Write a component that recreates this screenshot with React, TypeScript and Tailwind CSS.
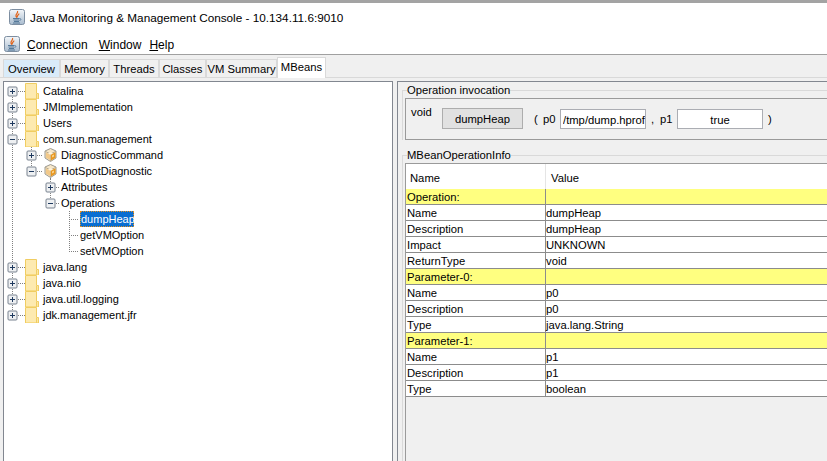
import * as React from "react";

const LEVELS = [
    { x: 12, text: 43 },
    { x: 31, text: 61 },
    { x: 50, text: 61 },
    { x: 69, text: 80 },
];

function JavaIcon() {
    return (
        <svg width="16" height="16" viewBox="0 0 16 16" className="shrink-0">
            <defs>
                <linearGradient id="javaBg" x1="0" y1="0" x2="0" y2="1">
                    <stop offset="0" stopColor="#f4f7fa" />
                    <stop offset="1" stopColor="#a9bccf" />
                </linearGradient>
            </defs>
            <rect x="0.5" y="0.5" width="15" height="15" rx="2" fill="url(#javaBg)" stroke="#7d8ea1" />
            <path d="M8.500 2C9.500 4 6.500 5 7 7c.2.8.7 1.200 1 1.600C7.600 7.200 9.600 6 10 4.600 9.800 5.800 8 6.500 8.200 8" fill="none" stroke="#e2641b" strokeWidth="1.200" />
            <path d="M4 9.500h6.500M4.500 11h5.500M5 12.500h5M4 14h7" stroke="#4a6f92" strokeWidth="0.9" />
            <path d="M10.500 9.800c2-.5 2 1.500 0 1.700" fill="none" stroke="#4a6f92" strokeWidth="0.8" />
        </svg>
    );
}

function Expander(props: { x: number, open: boolean }) {
    const { x, open } = props;
    return (
        <g>
            <rect x={x - 4} y="4" width="9" height="9" rx="1" fill="#eef0f2" stroke="#78828f" />
            <path d={`M${x - 2} 8.500h5`} stroke="#1f3a5f" />
            {!open && <path d={`M${x + 0.5} 6v5`} stroke="#1f3a5f" />}
        </g>
    );
}

function Folder() {
    return (
        <g>
            <path d="M25.500 0.500h11v10h2v5.500h-13z" fill="#fde7a2" stroke="#f0cd62" />
            <path d="M26 1h10v14H26z" fill="#fdeab0" />
            <path d="M36.500 11v5" stroke="#f0cd62" />
        </g>
    );
}

function Bean() {
    return (
        <g>
            <path d="M50.500 1.500l5.500 2.500v7l-5.500 3.500-5.500-3.500V4z" fill="#f6e6c8" stroke="#9c9a90" />
            <path d="M45.500 4.500l5 2.500 5-2.500M50.500 7v7" fill="none" stroke="#a89a80" strokeWidth="0.8" />
            <path d="M51 7.500l4.500-2.200v5.400L51 13.500z" fill="#e8971f" />
            <path d="M46 5.500l4.500 2.200v5.500L46 10.700z" fill="#f2c98a" />
            <path d="M48 6.500l2.500-1.200 2.500 1.200-2.500 1.300z" fill="#fff4dc" />
            <path d="M52 8.500l2-1v2l-2 1z" fill="#fbd38a" />
        </g>
    );
}

function TreeRow(props: {
    level: number,
    label: string,
    box?: boolean,
    open?: boolean,
    first?: boolean,
    last?: boolean,
    guides?: number[],
    down?: number,
    icon?: "folder" | "bean",
    selected?: boolean,
}) {
    const { level, label, box, open, first, last, guides = [], down, icon, selected } = props;
    const { x, text } = LEVELS[level];
    const width = text - 4;
    const hEnd = icon === "folder" ? 25 : icon === "bean" ? 43 : text - 1;
    return (
        <div className="flex h-4 items-center">
            <svg width={width} height="16" viewBox={`4 0 ${width} 16`} className="shrink-0">
                <g stroke="#808080" strokeDasharray="1 1" fill="none">
                    {guides.map((g) => <path key={g} d={`M${g + 0.5} 0v16`} />)}
                    {down !== undefined && <path d={`M${down + 0.5} 9v7`} />}
                    <path d={`M${x + 0.5} ${first ? 8 : 0}V${last ? 8 : 16}`} />
                    <path d={`M${x} 8.500H${hEnd}`} />
                </g>
                {icon === "folder" && <Folder />}
                {icon === "bean" && <Bean />}
                {box && <Expander x={x} open={!!open} />}
            </svg>
            {selected ? (
                <span className="h-4 w-[54px] border border-dotted border-[#e8901c] bg-[#0a6ed1] leading-[15px] text-white">{label}</span>
            ) : (
                <span className="whitespace-nowrap pt-px">{label}</span>
            )}
        </div>
    );
}

function Tree() {
    return (
        <div className="h-full w-[390px] shrink-0 border border-b-0 border-[#828790] bg-white pt-px text-[11px]">
            <TreeRow level={0} label="Catalina" box first icon="folder" />
            <TreeRow level={0} label="JMImplementation" box icon="folder" />
            <TreeRow level={0} label="Users" box icon="folder" />
            <TreeRow level={0} label="com.sun.management" box open icon="folder" down={31} />
            <TreeRow level={1} label="DiagnosticCommand" box icon="bean" guides={[12]} />
            <TreeRow level={1} label="HotSpotDiagnostic" box open last icon="bean" guides={[12]} down={50} />
            <TreeRow level={2} label="Attributes" box guides={[12]} />
            <TreeRow level={2} label="Operations" box open last guides={[12]} down={69} />
            <TreeRow level={3} label="dumpHeap" selected guides={[12]} />
            <TreeRow level={3} label="getVMOption" guides={[12]} />
            <TreeRow level={3} label="setVMOption" last guides={[12]} />
            <TreeRow level={0} label="java.lang" box icon="folder" />
            <TreeRow level={0} label="java.nio" box icon="folder" />
            <TreeRow level={0} label="java.util.logging" box icon="folder" />
            <TreeRow level={0} label="jdk.management.jfr" box last icon="folder" />
        </div>
    );
}

function Tab(props: { label: string, width: string, hover?: boolean, active?: boolean }) {
    const { label, width, hover, active } = props;
    if (active) {
        return (
            <div className={`${width} z-10 -mb-px flex h-[21px] items-center justify-center border border-b-0 border-[#d9d9d9] bg-white pb-px`}>
                {label}
            </div>
        );
    }
    return (
        <div className={`${width} flex h-[18px] items-center justify-center whitespace-nowrap border border-b-0 border-[#d9d9d9] pt-px ${hover ? "bg-[#d9ebf9]" : "bg-[#f0f0f0]"}`}>
            {label}
        </div>
    );
}

function InfoRow(props: { name: string, value?: string, section?: boolean }) {
    const { name, value, section } = props;
    return (
        <div className={`flex h-4 border-b border-[#8c8c8c] leading-[17px] ${section ? "bg-[#ffff80]" : "bg-white"}`}>
            <div className="h-[15px] w-[140px] shrink-0 border-r border-[#8c8c8c] pl-px">{name}</div>
            <div className="h-[15px]">{value}</div>
        </div>
    );
}

function Section(props: { title: string, className: string, children: React.ReactNode }) {
    return (
        <fieldset className={`${props.className} flex min-w-0 flex-col border-t border-l border-[#d9d9d9] pl-[2px]`}>
            <legend className="ml-[2px] h-4 leading-4">{props.title}</legend>
            {props.children}
        </fieldset>
    );
}

export default function App() {
    return (
        <div className="flex h-[461px] w-[827px] flex-col overflow-hidden border-t-[3px] border-[#a3a3a3] bg-[#f0f0f0] font-['Liberation_Sans',sans-serif] text-[11.25px] text-black">
            <div className="flex h-[52px] shrink-0 flex-col border-b border-[#a0a0a0] bg-white">
                <div className="flex h-[28px] items-center gap-[5px] pl-[9px] text-[11.75px]">
                    <JavaIcon />
                    <span className="pt-[2px]">Java Monitoring &amp; Management Console - 10.134.11.6:9010</span>
                </div>
                <div className="flex h-[23px] items-center pt-[3px] pl-1 text-[12px]">
                    <JavaIcon />
                    <span className="ml-[7px] pt-px"><u>C</u>onnection</span>
                    <span className="ml-[11px] pt-px"><u>W</u>indow</span>
                    <span className="ml-[8px] pt-px"><u>H</u>elp</span>
                </div>
            </div>

            <div className="flex h-[23px] shrink-0 items-end border-b border-[#d9d9d9] pl-[3px]">
                <Tab label="Overview" width="w-[57px]" hover />
                <Tab label="Memory" width="w-[49px]" />
                <Tab label="Threads" width="w-[50px]" />
                <Tab label="Classes" width="w-[47px]" />
                <Tab label="VM Summary" width="w-[71px]" />
                <Tab label="MBeans" width="w-[49px]" active />
            </div>

            <div className="flex min-h-0 flex-1 pt-[3px] pl-[3px]">
                <Tree />
                <div className="ml-1 flex min-w-0 flex-1 flex-col border-t border-l border-[#828790] pl-1">
                    <Section title="Operation invocation" className="h-[58px] shrink-0">
                        <div className="flex h-[42px] items-start border border-r-0 border-[#9a9a9a] pl-[5px]">
                            <span className="mt-[5px] w-[31px] leading-4">void</span>
                            <button className="mt-[9px] h-[21px] w-[81px] border border-[#adadad] bg-[#e1e1e1] pt-px">dumpHeap</button>
                            <div className="mt-[10px] ml-[11px] flex items-center">
                                <span className="w-[9px] pt-px">(</span>
                                <span className="w-[17px] pt-px">p0</span>
                                <input readOnly value="/tmp/dump.hprof" className="h-5 w-[86px] border border-[#abadb3] bg-white pt-px pl-[2px]" />
                                <span className="ml-[5px] w-[9px] pt-px">,</span>
                                <span className="w-[17px] pt-px">p1</span>
                                <input readOnly value="true" className="h-5 w-[86px] border border-[#abadb3] bg-white pt-px text-center" />
                                <span className="ml-[5px] pt-px">)</span>
                            </div>
                        </div>
                    </Section>
                    <Section title="MBeanOperationInfo" className="mt-[7px] min-h-0 flex-1">
                        <div className="min-h-0 flex-1 border-t border-l border-[#9a9a9a]">
                            <div className="flex h-[25px] items-center bg-white">
                                <div className="flex h-[25px] w-[139px] shrink-0 items-center pt-[3px] pl-1">Name</div>
                                <div className="flex h-[25px] items-center border-l border-[#e5e5e5] pt-[3px] pl-[5px]">Value</div>
                            </div>
                            <InfoRow name="Operation:" section />
                            <InfoRow name="Name" value="dumpHeap" />
                            <InfoRow name="Description" value="dumpHeap" />
                            <InfoRow name="Impact" value="UNKNOWN" />
                            <InfoRow name="ReturnType" value="void" />
                            <InfoRow name="Parameter-0:" section />
                            <InfoRow name="Name" value="p0" />
                            <InfoRow name="Description" value="p0" />
                            <InfoRow name="Type" value="java.lang.String" />
                            <InfoRow name="Parameter-1:" section />
                            <InfoRow name="Name" value="p1" />
                            <InfoRow name="Description" value="p1" />
                            <InfoRow name="Type" value="boolean" />
                        </div>
                    </Section>
                </div>
            </div>
        </div>
    );
}
